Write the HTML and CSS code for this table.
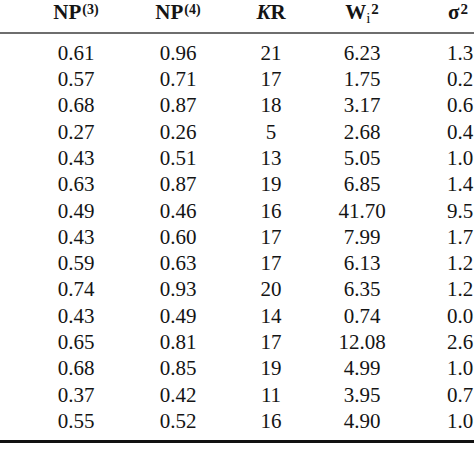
FILE: index.html
```html
<!DOCTYPE html>
<html>
<head>
<meta charset="utf-8">
<link rel="stylesheet" href="styles.css">
</head>
<body>
<div class="table">
  <div class="row head">
    <div>NP<sup>(3)</sup></div>
    <div>NP<sup>(4)</sup></div>
    <div><i>K</i>R</div>
    <div>W<sub>i</sub><sup class="sq">2</sup></div>
    <div class="last">σ<sup class="sq">2</sup></div>
  </div>
  <div class="body">
    <div class="row"><div>0.61</div><div>0.96</div><div>21</div><div>6.23</div><div class="last">1.3</div></div>
    <div class="row"><div>0.57</div><div>0.71</div><div>17</div><div>1.75</div><div class="last">0.2</div></div>
    <div class="row"><div>0.68</div><div>0.87</div><div>18</div><div>3.17</div><div class="last">0.6</div></div>
    <div class="row"><div>0.27</div><div>0.26</div><div>5</div><div>2.68</div><div class="last">0.4</div></div>
    <div class="row"><div>0.43</div><div>0.51</div><div>13</div><div>5.05</div><div class="last">1.0</div></div>
    <div class="row"><div>0.63</div><div>0.87</div><div>19</div><div>6.85</div><div class="last">1.4</div></div>
    <div class="row"><div>0.49</div><div>0.46</div><div>16</div><div>41.70</div><div class="last">9.5</div></div>
    <div class="row"><div>0.43</div><div>0.60</div><div>17</div><div>7.99</div><div class="last">1.7</div></div>
    <div class="row"><div>0.59</div><div>0.63</div><div>17</div><div>6.13</div><div class="last">1.2</div></div>
    <div class="row"><div>0.74</div><div>0.93</div><div>20</div><div>6.35</div><div class="last">1.2</div></div>
    <div class="row"><div>0.43</div><div>0.49</div><div>14</div><div>0.74</div><div class="last">0.0</div></div>
    <div class="row"><div>0.65</div><div>0.81</div><div>17</div><div>12.08</div><div class="last">2.6</div></div>
    <div class="row"><div>0.68</div><div>0.85</div><div>19</div><div>4.99</div><div class="last">1.0</div></div>
    <div class="row"><div>0.37</div><div>0.42</div><div>11</div><div>3.95</div><div class="last">0.7</div></div>
    <div class="row"><div>0.55</div><div>0.52</div><div>16</div><div>4.90</div><div class="last">1.0</div></div>
  </div>
</div>
</body>
</html>
```

FILE: styles.css
```css
html, body {
  margin: 0;
  padding: 0;
  background: #fff;
  overflow: hidden;
}
body {
  width: 474px;
  height: 474px;
  font-family: "Liberation Serif", "Times New Roman", serif;
  font-size: 21px;
  color: #141414;
}
.table {
  width: 474px;
  overflow: hidden;
}
.row {
  display: grid;
  grid-template-columns: 102px 102px 84px 98px 63px;
  padding-left: 25px;
  height: 26.3px;
  line-height: 26.3px;
  text-align: center;
  white-space: nowrap;
}
.row .last {
  text-align: left;
  padding-left: 36px;
}
.head {
  height: 32px;
  line-height: 25px;
  font-weight: bold;
  border-bottom: 2px solid #6e6e6e;
}
.head .last {
  padding-left: 37px;
}
.head i {
  font-style: italic;
}
.head sup {
  font-size: 14px;
  line-height: 0;
  vertical-align: 5px;
  margin-left: 1px;
}
.head sup.sq {
  font-size: 15px;
  vertical-align: 5px;
}
.head sub {
  font-size: 15px;
  line-height: 0;
  vertical-align: -4px;
  font-weight: normal;
}
.body {
  padding-top: 5.8px;
  padding-bottom: 5.7px;
  border-bottom: 3px solid #111;
}
```
